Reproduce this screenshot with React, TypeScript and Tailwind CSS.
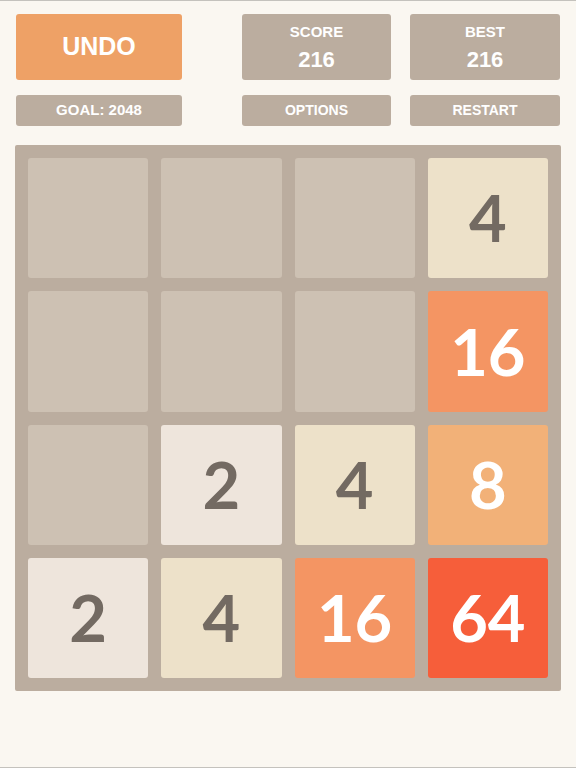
const board: number[][] = [
  [0, 0, 0, 4],
  [0, 0, 0, 16],
  [0, 2, 4, 8],
  [2, 4, 16, 64],
]

const tileStyles: Record<number, string> = {
  0: "bg-[#cdc1b3]",
  2: "bg-[#eee5dc] text-[#736a62]",
  4: "bg-[#ede1c9] text-[#736a62]",
  8: "bg-[#f2b178] text-white",
  16: "bg-[#f49563] text-white",
  64: "bg-[#f65e3a] text-white",
}

function Box({ children, className = "" }: { children: React.ReactNode; className?: string }) {
  return (
    <div className={`rounded-[3px] bg-[#bbad9f] text-white font-bold flex flex-col items-center justify-center ${className}`}>
      {children}
    </div>
  )
}

export default function App() {
  return (
    <div
      className="w-[576px] h-[768px] bg-[#faf7f1] border-t border-b border-[#c4c2bd] flex flex-col"
      style={{ fontFamily: '"Liberation Sans", Arial, sans-serif' }}
    >
      {/* Header */}
      <div className="pl-[16px] pt-[13px] flex gap-[60px]">
        <div className="flex flex-col gap-[15px] w-[166px]">
          <div className="h-[66px] rounded-[3px] bg-[#eea166] text-white font-bold text-[25px] flex items-center justify-center">
            UNDO
          </div>
          <Box className="h-[31px] text-[15px]">GOAL: 2048</Box>
        </div>
        <div className="flex gap-[19px]">
          <div className="flex flex-col gap-[15px] w-[149px]">
            <Box className="h-[66px]">
              <span className="text-[15px] leading-none">SCORE</span>
              <span className="text-[22px] leading-none mt-[10px]">216</span>
            </Box>
            <Box className="h-[31px] text-[14px]">OPTIONS</Box>
          </div>
          <div className="flex flex-col gap-[15px] w-[150px]">
            <Box className="h-[66px]">
              <span className="text-[15px] leading-none">BEST</span>
              <span className="text-[22px] leading-none mt-[10px]">216</span>
            </Box>
            <Box className="h-[31px] text-[14px]">RESTART</Box>
          </div>
        </div>
      </div>

      {/* Board */}
      <div className="ml-[15px] mt-[19px] w-[546px] h-[546px] bg-[#bbad9f] rounded-[2px] p-[13px] grid grid-cols-4 grid-rows-4 gap-[13px]">
        {board.flat().map((v, i) => (
          <div
            key={i}
            className={`rounded-[3px] flex items-center justify-center font-bold text-[65px] ${tileStyles[v]}`}
            style={{ fontFamily: "Lato, sans-serif" }}
          >
            {v > 0 ? v : ""}
          </div>
        ))}
      </div>
    </div>
  )
}
